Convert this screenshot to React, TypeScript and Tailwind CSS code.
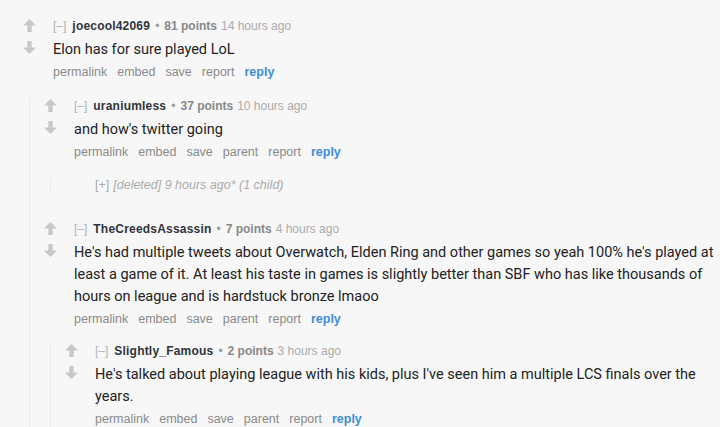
import type { ReactNode } from 'react'

/**
 * Flèches de vote (haut / bas)
 */
function Arrow({ down = false }: { down?: boolean }) {
  return (
    <svg width="13" height="13" viewBox="0 0 13 13" className={down ? 'rotate-180' : ''}>
      <path d="M6.5 0 L13 6.5 L8.7 6.5 L8.7 13 L4.3 13 L4.3 6.5 L0 6.5 Z" fill="#c8c8c8" />
    </svg>
  )
}

interface CommentProps {
  author: string
  points: number
  time: string
  body: ReactNode
  showParent?: boolean
  childGap?: string
  children?: ReactNode
}

function Comment({ author, points, time, body, showParent = false, childGap = 'mt-[18px]', children }: CommentProps) {
  const actions = showParent
    ? ['permalink', 'embed', 'save', 'parent', 'report']
    : ['permalink', 'embed', 'save', 'report']

  return (
    <div>
      <div className="flex">
        <div className="w-[30px] shrink-0 flex flex-col items-start pt-[1px] gap-[9px]">
          <Arrow />
          <Arrow down />
        </div>
        <div className="flex-1">
          <div className="text-[12px] leading-[16px] flex items-baseline">
            <span className="text-[#b4b4b4] mr-[6px]">[–]</span>
            <span className="font-bold text-[#30343a] tracking-[0.2px]">{author}</span>
            <span className="text-[#9a9a9a] mx-[5px]">•</span>
            <span className="font-bold text-[#888]">{points} points</span>
            <span className="text-[#ababab] ml-[4px]">{time}</span>
          </div>
          <div
            className="text-[14.5px] leading-[22px] text-[#222] mt-[5px]"
            style={{ fontFamily: 'Roboto, "Liberation Sans", sans-serif' }}
          >
            {body}
          </div>
          <div className="text-[12.5px] leading-[16px] mt-[3px] flex gap-[10px] text-[#8a8a8a]">
            {actions.map((a) => (
              <span key={a}>{a}</span>
            ))}
            <span className="font-bold text-[#3e8ed8]">reply</span>
          </div>
        </div>
      </div>
      {children && (
        <div className={`ml-[6px] ${childGap} border-l border-[#ebebeb] pl-[14px]`}>{children}</div>
      )}
    </div>
  )
}

export default function App() {
  return (
    <div
      className="w-[720px] h-[427px] overflow-hidden bg-[#f7f7f7] pl-[23px] pt-[18px]"
      style={{ fontFamily: '"Liberation Sans", Arial, sans-serif' }}
    >
      <Comment author="joecool42069" points={81} time="14 hours ago" body="Elon has for sure played LoL">
        <div className="flex flex-col gap-[17px]">
          <Comment
            author="uraniumless"
            points={37}
            time="10 hours ago"
            body="and how's twitter going"
            showParent
            childGap="mt-[17px]"
          >
            <div className="pl-[30px] text-[12.5px] leading-[16px] text-[#ababab] mt-[2px]">
              <span className="mr-[4px]">[+]</span>
              <span className="italic">[deleted] 9 hours ago* (1 child)</span>
            </div>
          </Comment>
          <div className="pt-[11px]">
            <Comment
              author="TheCreedsAssassin"
              points={7}
              time="4 hours ago"
              body="He's had multiple tweets about Overwatch, Elden Ring and other games so yeah 100% he's played at least a game of it. At least his taste in games is slightly better than SBF who has like thousands of hours on league and is hardstuck bronze lmaoo"
              showParent
              childGap="mt-[16px]"
            >
              <Comment
                author="Slightly_Famous"
                points={2}
                time="3 hours ago"
                body="He's talked about playing league with his kids, plus I've seen him a multiple LCS finals over the years."
                showParent
              />
            </Comment>
          </div>
        </div>
      </Comment>
    </div>
  )
}
